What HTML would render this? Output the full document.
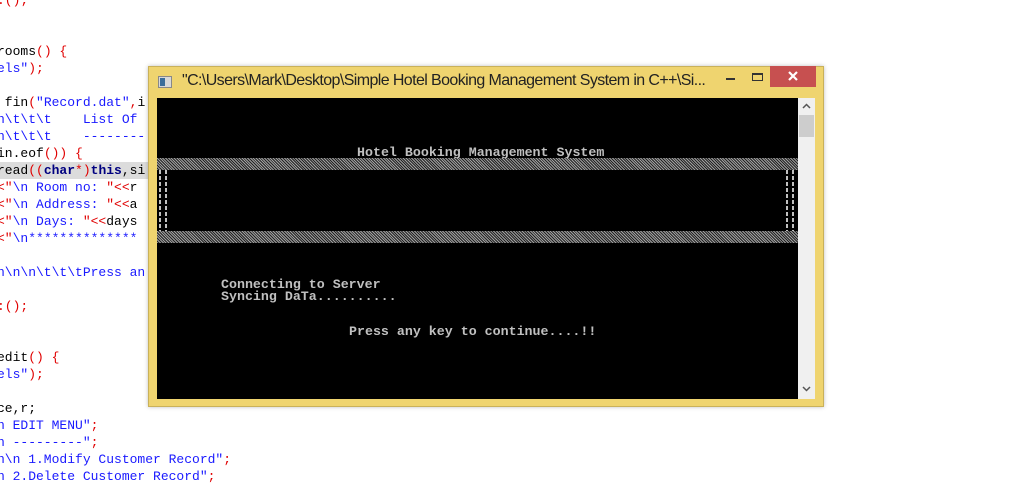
<!DOCTYPE html>
<html><head><meta charset="utf-8"><style>
*{margin:0;padding:0;box-sizing:border-box}
body{width:1015px;height:477px;background:#fff;position:relative;overflow:hidden;font-family:"Liberation Mono",monospace}
.code{position:absolute;left:-3px;top:-8px;font-size:13px;line-height:17px;color:#000}
.code div{height:17px;white-space:pre}
.hl{background:#dcdcdc;width:200px}
.r{color:#e00000}.b{color:#1a1aff}.k{color:#000080;font-weight:bold}
.win{position:absolute;left:148px;top:66px;width:676px;height:341px;background:#efd46f;border:1px solid #c9b15a;box-shadow:0 0 4px rgba(0,0,0,.25)}
.title{position:absolute;left:33px;top:5px;font-family:"Liberation Sans",sans-serif;font-size:16px;color:#222;letter-spacing:-0.6px;white-space:nowrap}
.ico{position:absolute;left:9px;top:9px;width:14px;height:12px;background:#d8d8d8;border:1px solid #888}
.ico:after{content:"";position:absolute;left:1px;top:1px;width:5px;height:8px;background:#3a6d9a}
.close{position:absolute;left:621px;top:-1px;width:46px;height:21px;background:#c75050}
.min{position:absolute;left:577px;top:11px;width:9px;height:2px;background:#333}
.max{position:absolute;left:603px;top:6px;width:11px;height:8px;border:1px solid #333;border-top-width:2px}
.con{position:absolute;left:8px;top:31px;width:641px;height:301px;background:#000}
.sb{position:absolute;left:649px;top:31px;width:17px;height:301px;background:#f0f0f0}
.thumb{position:absolute;left:1px;top:17px;width:15px;height:22px;background:#cdcdcd}
.ct{position:absolute;color:#c0c0c0;font-weight:bold;font-size:13.3px;white-space:pre;line-height:12px}
.hatch{position:absolute;left:0;width:641px;background:repeating-linear-gradient(45deg,#a0a0a0 0 1px,#222 1px 2px)}
.bar{position:absolute;width:2px;background:repeating-linear-gradient(#c0c0c0 0 4px,#000 4px 6px)}
</style></head><body>
<div class="code"><div><span class="r">:();</span></div><div> </div><div> </div><div>rooms<span class="r">() {</span></div><div><span class="b">els"</span><span class="r">);</span></div><div> </div><div> fin<span class="r">(</span><span class="b">"Record.dat"</span><span class="r">,</span>i</div><div><span class="b">n\t\t\t    List Of</span></div><div><span class="b">n\t\t\t    --------</span></div><div>in.eof<span class="r">()) {</span></div><div class="hl">read<span class="r">((</span><span class="k">char</span><span class="r">*)</span><span class="k">this</span>,si</div><div><span class="r">&lt;"</span><span class="b">\n Room no: </span><span class="r">"&lt;&lt;</span>r</div><div><span class="r">&lt;"</span><span class="b">\n Address: </span><span class="r">"&lt;&lt;</span>a</div><div><span class="r">&lt;"</span><span class="b">\n Days: </span><span class="r">"&lt;&lt;</span>days</div><div><span class="r">&lt;"</span><span class="b">\n**************</span></div><div> </div><div><span class="b">n\n\n\t\t\tPress an</span></div><div> </div><div><span class="r">:();</span></div><div> </div><div> </div><div>edit<span class="r">() {</span></div><div><span class="b">els"</span><span class="r">);</span></div><div> </div><div>ce,r;</div><div><span class="b">n EDIT MENU"</span><span class="r">;</span></div><div><span class="b">n ---------"</span><span class="r">;</span></div><div><span class="b">n\n 1.Modify Customer Record"</span><span class="r">;</span></div><div><span class="b">n 2.Delete Customer Record"</span><span class="r">;</span></div></div>
<div class="win">
<div class="ico"></div>
<div class="title">"C:\Users\Mark\Desktop\Simple Hotel Booking Management System in C++\Si...</div>
<div class="min"></div><div class="max"></div>
<div class="close"><svg width="46" height="21" viewBox="0 0 46 21"><path d="M19 6L27 14M27 6L19 14" stroke="#fff" stroke-width="2.2"/></svg></div>
<div class="con">
<div class="ct" style="left:200px;top:49px">Hotel Booking Management System</div>
<div class="hatch" style="top:60px;height:12px"></div>
<div class="hatch" style="top:133px;height:12px"></div>
<div class="bar" style="left:2px;top:72px;height:61px"></div>
<div class="bar" style="left:8px;top:72px;height:61px"></div>
<div class="bar" style="left:629px;top:72px;height:61px"></div>
<div class="bar" style="left:635px;top:72px;height:61px"></div>
<div class="ct" style="left:64px;top:181px">Connecting to Server</div>
<div class="ct" style="left:64px;top:193px">Syncing DaTa..........</div>
<div class="ct" style="left:192px;top:228px">Press any key to continue....!!</div>
</div>
<div class="sb"><svg style="position:absolute;left:4px;top:5px" width="9" height="6"><path d="M1 5L4.5 1.5L8 5" stroke="#555" stroke-width="1.5" fill="none"/></svg><div class="thumb"></div><svg style="position:absolute;left:4px;top:288px" width="9" height="6"><path d="M1 1L4.5 4.5L8 1" stroke="#555" stroke-width="1.5" fill="none"/></svg></div>
</div>
</body></html>
